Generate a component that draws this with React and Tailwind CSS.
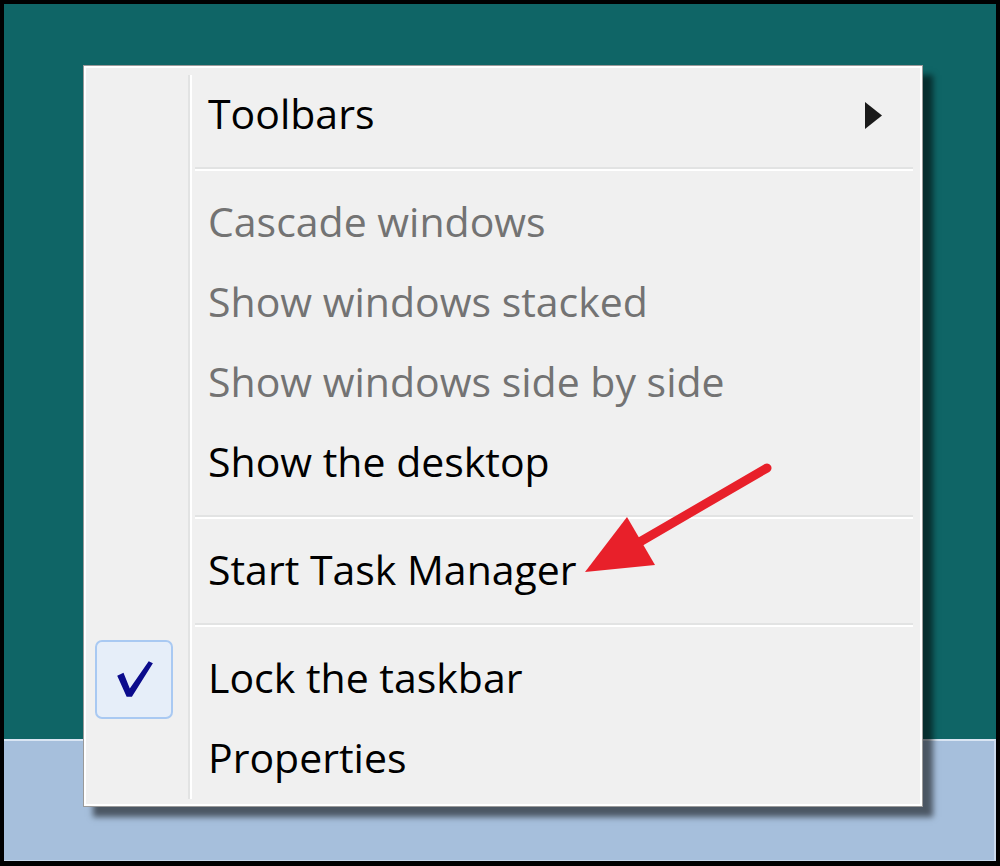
import React from 'react';

const items = [
  { type: 'item', label: 'Toolbars', submenu: true },
  { type: 'sep' },
  { type: 'item', label: 'Cascade windows', disabled: true },
  { type: 'item', label: 'Show windows stacked', disabled: true },
  { type: 'item', label: 'Show windows side by side', disabled: true },
  { type: 'item', label: 'Show the desktop' },
  { type: 'sep' },
  { type: 'item', label: 'Start Task Manager' },
  { type: 'sep' },
  { type: 'item', label: 'Lock the taskbar', checked: true },
  { type: 'item', label: 'Properties' },
];

function CheckBox() {
  return (
    <div className="w-[78px] h-[79px] rounded-[7px] border-2 border-[#a9c9f2] bg-[#e6eef9] flex items-center justify-center">
      <svg width="42" height="42" viewBox="0 0 40 40">
        <path d="M4 17 L10 14 L16 29 L34 3 L38 5 L18 37 L13 37 Z" fill="#0b0b8c" />
      </svg>
    </div>
  );
}

function MenuRow({ item }) {
  if (item.type === 'sep') {
    return (
      <div className="flex h-[28px]">
        <div className="w-[102px]" />
        <div className="flex-1 flex flex-col justify-center border-l-2 border-[#e2e3e3] shadow-[inset_2px_0_0_#ffffff] pl-[5px] pr-[7px]">
          <div className="h-[2px] bg-[#e2e3e3]" />
          <div className="h-[2px] bg-white" />
        </div>
      </div>
    );
  }
  return (
    <div className="flex h-[80px]">
      <div className="w-[102px] flex items-center pl-[9px]">
        {item.checked && <CheckBox />}
      </div>
      <div className="flex-1 flex items-center justify-between border-l-2 border-[#e2e3e3] shadow-[inset_2px_0_0_#ffffff] pl-[18px] pr-[38px]">
        <span className={item.disabled ? 'text-[#737373] -mt-[4px]' : 'text-black -mt-[4px]'}>{item.label}</span>
        {item.submenu && (
          <svg width="17" height="27" viewBox="0 0 17 27">
            <polygon points="0,0 17,13.5 0,27" fill="#1a1a1a" />
          </svg>
        )}
      </div>
    </div>
  );
}

export default function App() {
  return (
    <div className="relative w-[1000px] h-[866px] bg-black pt-[4px] pl-[4px] pr-[4px] pb-[5px]">
      <div className="flex flex-col h-full">
        <div className="flex-1 bg-[#0f6566]" />
        <div className="h-[122px] bg-[#a6bfdc] border-t-2 border-[#d9e5f3] border-r-2 border-r-[#c9d9ec] border-b border-b-[#c9d9ec]" />
      </div>

      <div
        className="absolute left-[83px] top-[65px] w-[840px] h-[742px] border border-[#9a9a9a] bg-[#f0f0f0] shadow-[10px_10px_6px_rgba(0,0,0,0.55)]"
        style={{ fontFamily: '"Open Sans", "Noto Sans", sans-serif' }}
      >
        <div className="h-full border-2 border-white pt-[7px] text-[41px] leading-none">
          {items.map((item, i) => (
            <MenuRow key={i} item={item} />
          ))}
        </div>
      </div>

      <svg className="absolute left-[570px] top-[450px]" width="210" height="140" viewBox="0 0 210 140">
        <line x1="197" y1="18" x2="68" y2="93" stroke="#e8202a" strokeWidth="9" strokeLinecap="round" />
        <polygon points="15,122 57,67 85,115" fill="#e8202a" />
      </svg>
    </div>
  );
}
